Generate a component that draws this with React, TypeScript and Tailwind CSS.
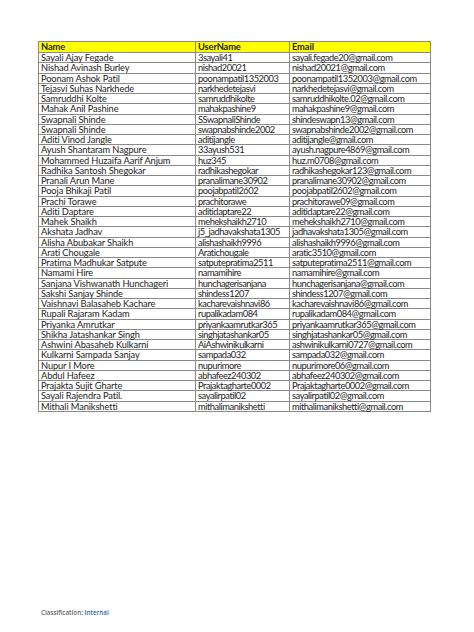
const rows: [string, string, string][] = [
  ["Sayali Ajay Fegade", "3sayali41", "sayali.fegade20@gmail.com"],
  ["Nishad Avinash Burley", "nishad20021", "nishad20021@gmail.com"],
  ["Poonam Ashok Patil", "poonampatil1352003", "poonampatil1352003@gmail.com"],
  ["Tejasvi Suhas Narkhede", "narkhedetejasvi", "narkhedetejasvi@gmail.com"],
  ["Samruddhi Kolte", "samruddhikolte", "samruddhikolte.02@gmail.com"],
  ["Mahak Anil Pashine", "mahakpashine9", "mahakpashine9@gmail.com"],
  ["Swapnali Shinde", "SSwapnaliShinde", "shindeswapn13@gmail.com"],
  ["Swapnali Shinde", "swapnabshinde2002", "swapnabshinde2002@gmail.com"],
  ["Aditi Vinod Jangle", "aditijangle", "aditijangle@gmail.com"],
  ["Ayush Shantaram Nagpure", "33ayush531", "ayush.nagpure4869@gmail.com"],
  ["Mohammed Huzaifa Aarif Anjum", "huz345", "huz.m0708@gmail.com"],
  ["Radhika Santosh Shegokar", "radhikashegokar", "radhikashegokar123@gmail.com"],
  ["Pranali Arun Mane", "pranalimane30902", "pranalimane30902@gmail.com"],
  ["Pooja Bhikaji Patil", "poojabpatil2602", "poojabpatil2602@gmail.com"],
  ["Prachi Torawe", "prachitorawe", "prachitorawe09@gmail.com"],
  ["Aditi Daptare", "aditidaptare22", "aditidaptare22@gmail.com"],
  ["Mahek Shaikh", "mehekshaikh2710", "mehekshaikh2710@gmail.com"],
  ["Akshata Jadhav", "j5_jadhavakshata1305", "jadhavakshata1305@gmail.com"],
  ["Alisha Abubakar Shaikh", "alishashaikh9996", "alishashaikh9996@gmail.com"],
  ["Arati Chougale", "Aratichougale", "aratic3510@gmail.com"],
  ["Pratima Madhukar Satpute", "satputepratima2511", "satputepratima2511@gmail.com"],
  ["Namami Hire", "namamihire", "namamihire@gmail.com"],
  ["Sanjana Vishwanath Hunchageri", "hunchagerisanjana", "hunchagerisanjana@gmail.com"],
  ["Sakshi Sanjay Shinde", "shindess1207", "shindess1207@gmail.com"],
  ["Vaishnavi Balasaheb Kachare", "kacharevaishnavi86", "kacharevaishnavi86@gmail.com"],
  ["Rupali Rajaram Kadam", "rupalikadam084", "rupalikadam084@gmail.com"],
  ["Priyanka Amrutkar", "priyankaamrutkar365", "priyankaamrutkar365@gmail.com"],
  ["Shikha Jatashankar Singh", "singhjatashankar05", "singhjatashankar05@gmail.com"],
  ["Ashwini Abasaheb Kulkarni", "AiAshwinikulkarni", "ashwinikulkarni0727@gmail.com"],
  ["Kulkarni Sampada Sanjay", "sampada032", "sampada032@gmail.com"],
  ["Nupur I More", "nupurimore", "nupurimore06@gmail.com"],
  ["Abdul Hafeez", "abhafeez240302", "abhafeez240302@gmail.com"],
  ["Prajakta Sujit Gharte", "Prajaktagharte0002", "Prajaktagharte0002@gmail.com"],
  ["Sayali Rajendra Patil.", "sayalirpatil02", "sayalirpatil02@gmail.com"],
  ["Mithali Manikshetti", "mithalimanikshetti", "mithalimanikshetti@gmail.com"],
];

const base = "border-r border-b border-[#8a8a8a] pl-[2px] h-[10.25px] leading-[9.5px] whitespace-nowrap";
const head = "border-r border-b border-[#8a8a8a] bg-[#ffff00] pl-[2px] h-[11px] leading-[10px] font-bold whitespace-nowrap";

export default function App() {
  return (
    <div className="w-[474px] h-[632px] bg-white relative font-['Lato',sans-serif] text-[#222222]">
      <div className="pt-[41px] pl-[38px]">
        <div className="grid grid-cols-[157px_94px_141px] border-t border-l border-[#8a8a8a] w-fit text-[9.3px]">
          <div className={`${head} tracking-[-0.12px]`}>Name</div>
          <div className={`${head} tracking-[-0.12px]`}>UserName</div>
          <div className={`${head} tracking-[-0.12px]`}>Email</div>
          {rows.map((r, i) => (
            <>
              <div key={`n${i}`} className={`${base} tracking-[-0.12px]`}>{r[0]}</div>
              <div key={`u${i}`} className={`${base} tracking-[-0.45px]`}>{r[1]}</div>
              <div key={`e${i}`} className={`${base} tracking-[-0.45px]`}>{r[2]}</div>
            </>
          ))}
        </div>
      </div>
      <div className="absolute left-[41px] top-[608px] text-[6.3px] font-['Open_Sans',sans-serif] font-semibold">
        <span className="text-[#666666]">Classification: </span>
        <span className="text-[#2b6cb0]">Internal</span>
      </div>
    </div>
  );
}
